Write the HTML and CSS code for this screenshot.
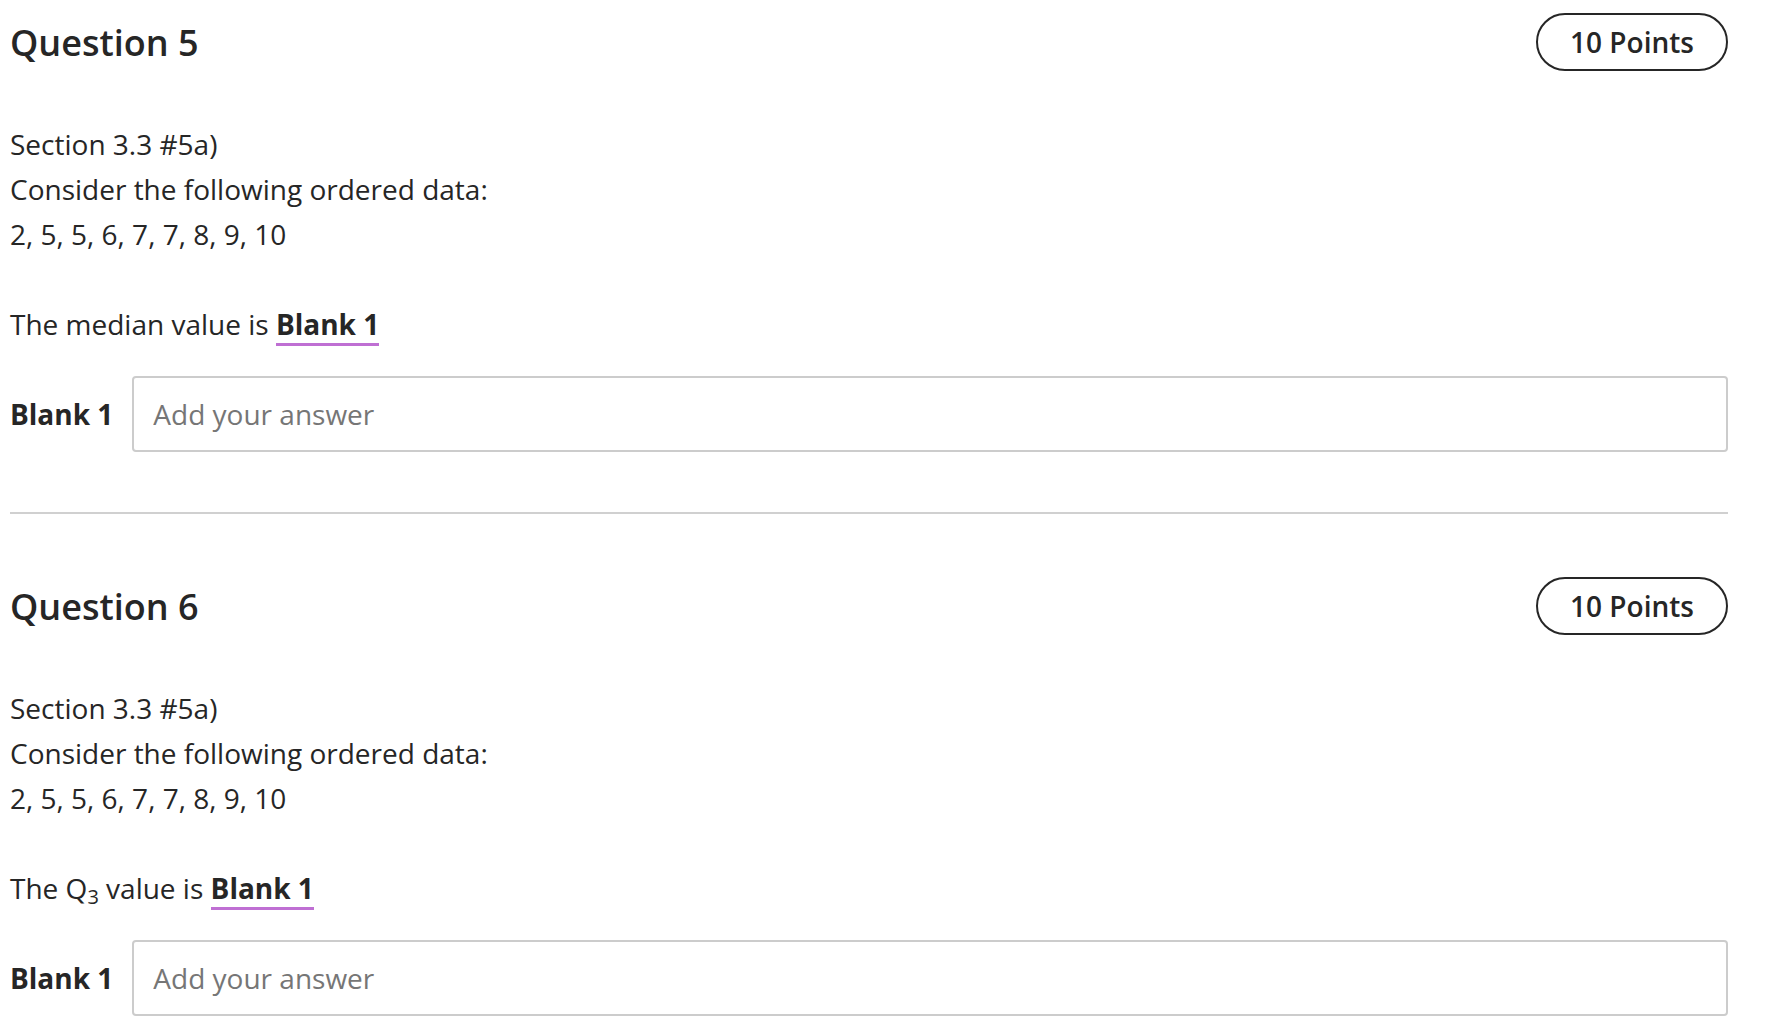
FILE: index.html
```html
<!DOCTYPE html>
<html lang="en">
<head>
<meta charset="utf-8">
<title>Questions</title>
<link rel="stylesheet" href="styles.css">
</head>
<body>
<main class="page">
  <section class="question">
    <header class="q-head">
      <h2 class="q-title">Question 5</h2>
      <span class="points">10 Points</span>
    </header>
    <div class="q-body">
      <p class="line">Section 3.3 #5a)</p>
      <p class="line">Consider the following ordered data:</p>
      <p class="line">2, 5, 5, 6, 7, 7, 8, 9, 10</p>
      <p class="line empty">&nbsp;</p>
      <p class="line">The median value is <strong class="blank-ref">Blank 1</strong></p>
    </div>
    <div class="answer-row">
      <label class="answer-label" for="q5b1">Blank 1</label>
      <input class="answer-input" id="q5b1" type="text" placeholder="Add your answer">
    </div>
  </section>
  <hr class="divider">
  <section class="question">
    <header class="q-head">
      <h2 class="q-title">Question 6</h2>
      <span class="points">10 Points</span>
    </header>
    <div class="q-body">
      <p class="line">Section 3.3 #5a)</p>
      <p class="line">Consider the following ordered data:</p>
      <p class="line">2, 5, 5, 6, 7, 7, 8, 9, 10</p>
      <p class="line empty">&nbsp;</p>
      <p class="line">The Q<sub class="sub">3</sub> value is <strong class="blank-ref">Blank 1</strong></p>
    </div>
    <div class="answer-row">
      <label class="answer-label" for="q6b1">Blank 1</label>
      <input class="answer-input" id="q6b1" type="text" placeholder="Add your answer">
    </div>
  </section>
</main>
</body>
</html>
```

FILE: styles.css
```css
* {
  box-sizing: border-box;
}

html, body {
  margin: 0;
  padding: 0;
  background: #ffffff;
}

body {
  font-family: "Open Sans", "Noto Sans", "Liberation Sans", sans-serif;
  color: #262626;
}

.page {
  padding: 13px 42px 0 10px;
}

.question {
  display: flex;
  flex-direction: column;
}

.q-head {
  display: flex;
  align-items: center;
  justify-content: space-between;
  height: 58px;
}

.q-title {
  margin: 0;
  font-size: 36px;
  font-weight: 600;
  line-height: 49px;
}

.points {
  display: flex;
  align-items: center;
  justify-content: center;
  height: 58px;
  width: 192px;
  border: 2px solid #262626;
  border-radius: 29px;
  font-size: 28px;
  font-weight: 600;
}

.q-body {
  margin-top: 51px;
}

.line {
  margin: 0;
  font-size: 28px;
  line-height: 45px;
}

.blank-ref {
  font-weight: 700;
  border-bottom: 3px solid #bf6fd3;
}

.sub {
  font-size: 20px;
  line-height: 0;
  vertical-align: -5px;
}

.answer-row {
  display: flex;
  align-items: center;
  gap: 19px;
  margin-top: 29px;
}

.answer-label {
  font-size: 28px;
  font-weight: 700;
  line-height: 38px;
  white-space: nowrap;
}

.answer-input {
  flex: 1;
  height: 76px;
  border: 2px solid #cccccc;
  border-radius: 4px;
  padding: 0 19px;
  font-family: inherit;
  font-size: 28px;
  color: #262626;
  background: #ffffff;
  outline: none;
}

.answer-input::placeholder {
  color: #767676;
  opacity: 1;
}

.divider {
  margin: 60px 0 63px 0;
  border: 0;
  height: 2px;
  background: #d0d0d0;
}
```
